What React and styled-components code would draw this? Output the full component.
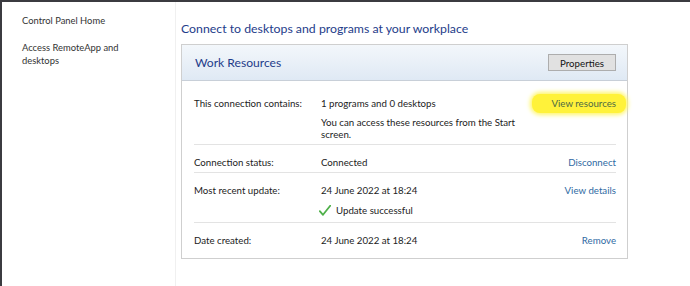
import React from 'react';
import styled, { createGlobalStyle } from 'styled-components';

const GlobalStyle = createGlobalStyle`
  html, body {
    margin: 0;
    padding: 0;
    background: #fff;
    overflow: hidden;
  }
`;

const rows = [
  {
    label: 'This connection contains:',
    values: ['1 programs and 0 desktops', 'You can access these resources from the Start screen.'],
    action: 'View resources',
    highlight: true,
  },
  { label: 'Connection status:', values: ['Connected'], action: 'Disconnect' },
  { label: 'Most recent update:', values: ['24 June 2022 at 18:24'], status: 'Update successful', action: 'View details' },
  { label: 'Date created:', values: ['24 June 2022 at 18:24'], action: 'Remove', last: true },
];

export default function App() {
  return (
    <>
      <GlobalStyle />
      <Frame>
        <Sidebar>
          <NavLink>Control Panel Home</NavLink>
          <NavLink>Access RemoteApp and desktops</NavLink>
        </Sidebar>
        <Main>
          <Title>Connect to desktops and programs at your workplace</Title>
          <Panel>
            <PanelHeader>
              <PanelTitle>Work Resources</PanelTitle>
              <Button>Properties</Button>
            </PanelHeader>
            <PanelBody>
              {rows.map((row, i) => (
                <Row key={row.label} $first={i === 0} $last={row.last} $status={!!row.status}>
                  <Label>{row.label}</Label>
                  <Values>
                    {row.values.map(v => <Value key={v}>{v}</Value>)}
                    {row.status && (
                      <Status>
                        <svg width="12" height="11" viewBox="0 0 12 11">
                          <path d="M0.8 6.2 L4 9.8 L11.2 0.8" fill="none" stroke="#4fb04a" strokeWidth="1.8" strokeLinecap="round" strokeLinejoin="round" />
                        </svg>
                        {row.status}
                      </Status>
                    )}
                  </Values>
                  <Action $highlight={row.highlight}>{row.action}</Action>
                </Row>
              ))}
            </PanelBody>
          </Panel>
        </Main>
      </Frame>
    </>
  );
}

const Frame = styled.div`
  width: 690px;
  height: 286px;
  box-sizing: border-box;
  border-top: 2px solid #3b3b40;
  border-left: 2px solid #3b3b40;
  display: flex;
  font-family: Lato, 'Noto Sans', sans-serif;
  font-size: 9.7px;
  color: #222;
`;

const Sidebar = styled.div`
  width: 174px;
  border-right: 1px solid #f0f0f0;
  padding: 12px 40px 0 20px;
  box-sizing: border-box;
  display: flex;
  flex-direction: column;
  gap: 14px;
`;

const NavLink = styled.div`
  color: #333;
  font-size: 9.4px;
  line-height: 13px;
  cursor: pointer;
`;

const Main = styled.div`
  flex: 1;
  padding: 18px 0 0 5px;
`;

const Title = styled.div`
  font-size: 12.3px;
  line-height: 18px;
  color: #1e3c8a;
`;

const Panel = styled.div`
  width: 447px;
  box-sizing: border-box;
  margin-top: 6px;
  border: 1px solid #cfcfcf;
`;

const PanelHeader = styled.div`
  height: 36px;
  box-sizing: border-box;
  background: linear-gradient(180deg, #f3f7fb 0%, #dfe9f4 100%);
  border-bottom: 1px solid #c8cfd8;
  display: flex;
  align-items: center;
  justify-content: space-between;
  padding: 0 11px 0 13px;
`;

const PanelTitle = styled.div`
  font-size: 12.1px;
  color: #1e3c8a;
`;

const Button = styled.button`
  width: 68px;
  height: 17px;
  padding: 0;
  background: #e1e1e1;
  border: 1px solid #adadad;
  font-family: inherit;
  font-size: 9.7px;
  color: #111;
`;

const PanelBody = styled.div`
  padding: 0 11px 0 12px;
`;

const Row = styled.div`
  display: grid;
  grid-template-columns: 127px 1fr auto;
  align-items: start;
  padding-top: ${p => (p.$first ? '16px' : '11px')};
  padding-bottom: ${p => (p.$last ? '12px' : p.$status ? '6px' : '4px')};
  border-bottom: ${p => (p.$last ? 'none' : '1px solid #e3e3e3')};
  line-height: 12px;
`;

const Label = styled.div``;

const Values = styled.div`
  display: flex;
  flex-direction: column;
  gap: 7px;
  max-width: 275px;
`;

const Value = styled.div``;

const Status = styled.div`
  display: flex;
  align-items: center;
  gap: 5px;
  margin-left: -2px;
  margin-top: 1px;
`;

const Action = styled.a`
  cursor: pointer;
  padding: ${p => (p.$highlight ? '3px 10px 4px 19px' : '0')};
  margin: ${p => (p.$highlight ? '-3px -10px -4px 0' : '0')};
  color: ${p => (p.$highlight ? '#4d6a44' : '#2f6aa3')};
  background: ${p => (p.$highlight ? '#fff23a' : 'transparent')};
  border-radius: ${p => (p.$highlight ? '8px' : '0')};
  box-shadow: ${p => (p.$highlight ? '0 0 4px 2px #fff66a' : 'none')};
`;
